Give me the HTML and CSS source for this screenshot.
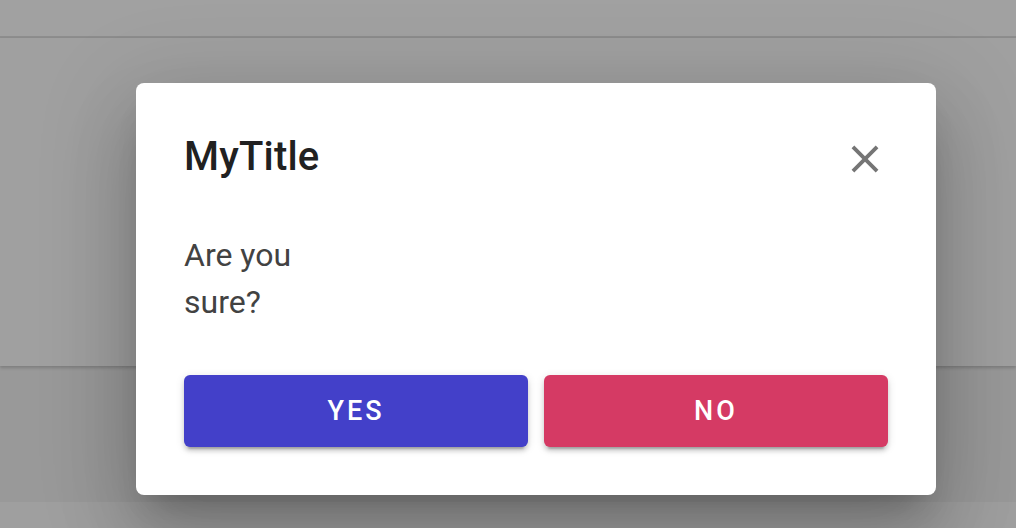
FILE: index.html
```html
<!DOCTYPE html>
<html lang="en">
<head>
    <meta charset="UTF-8">
    <meta name="viewport" content="width=device-width, initial-scale=1.0">
    <title>Confirm dialog</title>
    <link rel="stylesheet" href="styles.css">
</head>
<body>
    <!-- page behind the backdrop -->
    <div class="page">
        <div class="page-header"></div>
        <div class="page-card"></div>
        <div class="page-band"></div>
        <div class="page-footer"></div>
    </div>

    <!-- dialog -->
    <div class="dialog" role="dialog">
        <div class="dialog-header">
            <h2 class="dialog-title">MyTitle</h2>
            <button class="dialog-close" aria-label="close">
                <svg viewBox="0 0 24 24" width="46" height="46">
                    <path d="M19 6.41L17.59 5 12 10.59 6.41 5 5 6.41 10.59 12 5 17.59 6.41 19 12 13.41 17.59 19 19 17.59 13.41 12z"/>
                </svg>
            </button>
        </div>
        <p class="dialog-text">Are you sure?</p>
        <div class="dialog-actions">
            <button class="btn btn-yes">Yes</button>
            <button class="btn btn-no">No</button>
        </div>
    </div>
</body>
</html>
```

FILE: styles.css
```css
* {
    margin: 0;
    padding: 0;
    box-sizing: border-box;
}

body {
    height: 100vh;
    overflow: hidden;
    background: #a0a0a0;
    font-family: 'Roboto', 'Liberation Sans', sans-serif;
    position: relative;
}

/* background page (dimmed) */
.page {
    display: flex;
    flex-direction: column;
    height: 100%;
}

.page-header {
    height: 38px;
    background: #a1a1a1;
    border-bottom: 2px solid #8d8d8d;
}

.page-card {
    height: 328px;
    background: #a0a0a0;
    box-shadow: 0 2px 3px rgba(0,0,0,0.18);
    position: relative;
    z-index: 1;
}

.page-band {
    height: 136px;
    background: #999999;
}

.page-footer {
    flex: 1;
    background: #9f9f9f;
}

/* dialog */
.dialog {
    position: absolute;
    top: 83px;
    left: 136px;
    width: 800px;
    height: 412px;
    background: #fff;
    border-radius: 8px;
    padding: 51px 48px 48px;
    display: flex;
    flex-direction: column;
    box-shadow:
        0 22px 30px -14px rgba(0,0,0,0.2),
        0 48px 76px 6px rgba(0,0,0,0.14),
        0 18px 92px 16px rgba(0,0,0,0.12);
    z-index: 10;
}

.dialog-header {
    display: flex;
    justify-content: space-between;
    align-items: flex-start;
}

.dialog-title {
    font-size: 40px;
    font-weight: 500;
    line-height: 46px;
    color: #212121;
    letter-spacing: 0.2px;
}

.dialog-close {
    border: none;
    background: none;
    width: 46px;
    height: 46px;
    margin-top: 2px;
    display: flex;
}

.dialog-close svg {
    fill: #757575;
}

.dialog-text {
    margin-top: 50px;
    width: 140px;
    font-size: 32px;
    line-height: 47px;
    color: #424242;
}

.dialog-actions {
    margin-top: auto;
    display: flex;
    gap: 16px;
}

.btn {
    flex: 1;
    height: 72px;
    border: none;
    border-radius: 6px;
    color: #fff;
    font-family: inherit;
    font-size: 27px;
    font-weight: 500;
    letter-spacing: 3px;
    text-transform: uppercase;
    box-shadow:
        0 6px 2px -4px rgba(0,0,0,0.2),
        0 4px 4px 0 rgba(0,0,0,0.14),
        0 2px 10px 0 rgba(0,0,0,0.12);
}

.btn-yes {
    background: #4340c9;
}

.btn-no {
    background: #d53a64;
}
```
